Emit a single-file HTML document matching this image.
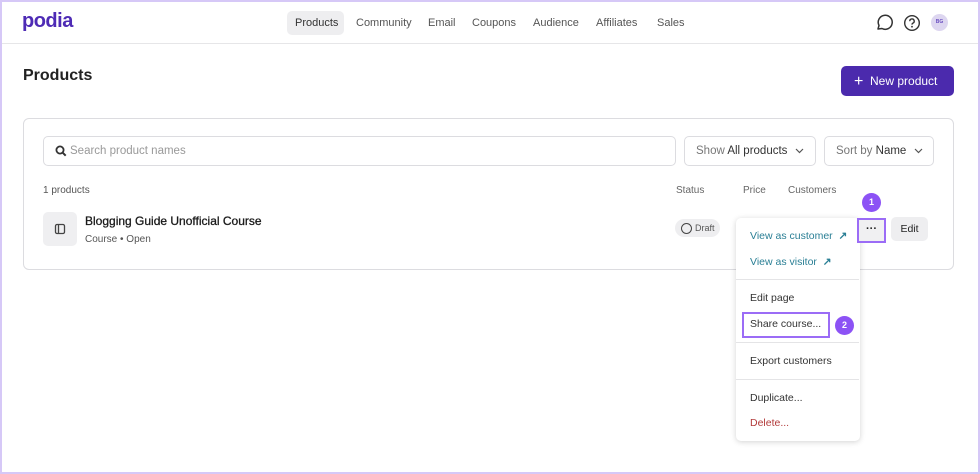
<!DOCTYPE html>
<html><head><style>
*{box-sizing:border-box;margin:0;padding:0}
body{width:980px;height:474px;overflow:hidden;font-family:"Liberation Sans",sans-serif;background:#fff;position:relative;color:#222}
.frame{position:absolute;inset:0;border:2px solid #d6c8f7;pointer-events:none;z-index:10}
.a{position:absolute;white-space:nowrap}
.hdr{position:absolute;left:0;top:0;width:980px;height:44px;border-bottom:1.5px solid #e6e6e8}
.nav{font-size:11px;color:#555;top:17px}
.btn{position:absolute;border:1px solid #dcdce0;border-radius:5px;background:#fff}
.badge{position:absolute;width:19px;height:19px;border-radius:50%;background:#8c52f5;color:#fff;font-size:9px;font-weight:bold;text-align:center;line-height:19px;z-index:5}
.mi{position:absolute;left:750px;font-size:10.5px;color:#333}
.sep{position:absolute;left:736px;width:123px;height:1px;background:#e4e4e6}
</style></head><body>
<div class="frame"></div>
<div class="hdr"></div>
<div class="a" style="left:22px;top:10px;font-size:20px;font-weight:bold;color:#4e2bb5;letter-spacing:-0.5px">podia</div>
<div class="a" style="left:287px;top:11px;width:57px;height:24px;background:#eeeef0;border-radius:5px"></div>
<div class="a nav" style="left:295px;color:#333">Products</div>
<div class="a nav" style="left:356px">Community</div>
<div class="a nav" style="left:428px">Email</div>
<div class="a nav" style="left:472px">Coupons</div>
<div class="a nav" style="left:533px">Audience</div>
<div class="a nav" style="left:596px">Affiliates</div>
<div class="a nav" style="left:657px">Sales</div>
<svg class="a" style="left:875px;top:14px" width="18" height="18" viewBox="0 0 18 18"><path d="M3 15 L4 11.5 A7 7 0 1 1 7 14.5 Z" fill="none" stroke="#333" stroke-width="1.5" stroke-linejoin="round"/></svg>
<svg class="a" style="left:903px;top:14px" width="18" height="18" viewBox="0 0 18 18"><circle cx="9" cy="9" r="7.3" fill="none" stroke="#333" stroke-width="1.4"/><path d="M6.8 7.2a2.2 2.2 0 1 1 3 2c-.6.3-.8.7-.8 1.4" fill="none" stroke="#333" stroke-width="1.4"/><circle cx="9" cy="12.7" r=".9" fill="#333"/></svg>
<div class="a" style="left:931px;top:14px;width:17px;height:17px;border-radius:50%;background:#ddd6f0;font-size:5px;color:#6b4fc0;text-align:center;line-height:17px;font-weight:bold">BG</div>

<div class="a" style="left:23px;top:67px;font-size:16px;font-weight:bold;color:#222">Products</div>
<div class="a" style="left:841px;top:66px;width:113px;height:30px;background:#4b2aad;border-radius:5px;color:#fff;font-size:12px;line-height:30px;padding-left:13px"><span style="font-size:16px;vertical-align:-1px">+</span>&nbsp; New product</div>

<div class="a" style="left:23px;top:118px;width:931px;height:152px;border:1px solid #dcdce0;border-radius:6px"></div>
<div class="btn" style="left:43px;top:136px;width:633px;height:30px"></div>
<svg class="a" style="left:55px;top:145px" width="12" height="12" viewBox="0 0 12 12"><circle cx="5" cy="5" r="3.6" fill="none" stroke="#333" stroke-width="1.8"/><path d="M7.7 7.7l3 3" stroke="#333" stroke-width="2"/></svg>
<div class="a" style="left:70px;top:145px;font-size:11.5px;color:#999">Search product names</div>
<div class="btn" style="left:684px;top:136px;width:132px;height:30px"></div>
<div class="a" style="left:696px;top:145px;font-size:11.5px;color:#777">Show <span style="color:#333">All products</span></div>
<svg class="a" style="left:795px;top:148px" width="9" height="6" viewBox="0 0 9 6"><path d="M1 1l3.5 3.5L8 1" fill="none" stroke="#555" stroke-width="1.2"/></svg>
<div class="btn" style="left:824px;top:136px;width:110px;height:30px"></div>
<div class="a" style="left:836px;top:145px;font-size:11.5px;color:#777">Sort by <span style="color:#333">Name</span></div>
<svg class="a" style="left:914px;top:148px" width="9" height="6" viewBox="0 0 9 6"><path d="M1 1l3.5 3.5L8 1" fill="none" stroke="#555" stroke-width="1.2"/></svg>

<div class="a" style="left:43px;top:185px;font-size:10px;color:#555">1 products</div>
<div class="a" style="left:676px;top:185px;font-size:10px;color:#666">Status</div>
<div class="a" style="left:743px;top:185px;font-size:10px;color:#666">Price</div>
<div class="a" style="left:788px;top:185px;font-size:10px;color:#666">Customers</div>

<div class="a" style="left:43px;top:212px;width:34px;height:34px;background:#efeff1;border-radius:5px"></div>
<svg class="a" style="left:54px;top:223px" width="12" height="12" viewBox="0 0 12 12"><rect x="1.5" y="1.5" width="9" height="9" rx="1.5" fill="none" stroke="#444" stroke-width="1.3"/><path d="M4.5 1.5v9" stroke="#444" stroke-width="1.3"/></svg>
<div class="a" style="left:85px;top:214px;font-size:12px;color:#1a1a1a;-webkit-text-stroke:0.3px #1a1a1a">Blogging Guide Unofficial Course</div>
<div class="a" style="left:85px;top:234px;font-size:10px;color:#555">Course • Open</div>

<div class="a" style="left:675px;top:219px;width:45px;height:18px;background:#eeeef0;border-radius:9px"></div>
<div class="a" style="left:681px;top:223px;width:11px;height:11px;border:1.3px solid #444;border-radius:50%"></div>
<div class="a" style="left:695px;top:223px;font-size:9px;color:#555">Draft</div>

<div class="a" style="left:736px;top:218px;width:124px;height:223px;background:#fff;border-radius:5px;box-shadow:0 1px 6px rgba(0,0,0,.18)"></div>
<div class="a" style="left:857px;top:218px;width:29px;height:25px;background:#f0f0f2;border:2px solid #9b6cf6;text-align:center;font-size:11px;font-weight:bold;line-height:18px;z-index:4">···</div>
<div class="a" style="left:891px;top:217px;width:37px;height:24px;background:#eeeef0;border-radius:5px;font-size:10.5px;text-align:center;line-height:24px">Edit</div>
<div class="badge" style="left:862px;top:193px">1</div>

<div class="mi" style="top:230px;color:#2a7f95">View as customer &nbsp;<b>&#8599;</b></div>
<div class="mi" style="top:256px;color:#2a7f95">View as visitor &nbsp;<b>&#8599;</b></div>
<div class="sep" style="top:279px"></div>
<div class="mi" style="top:292px">Edit page</div>
<div class="a" style="left:742px;top:312px;width:88px;height:26px;border:2px solid #9b6cf6"></div>
<div class="mi" style="top:318px">Share course...</div>
<div class="badge" style="left:835px;top:316px">2</div>
<div class="sep" style="top:342px"></div>
<div class="mi" style="top:355px">Export customers</div>
<div class="sep" style="top:379px"></div>
<div class="mi" style="top:392px">Duplicate...</div>
<div class="mi" style="top:417px;color:#b23a3a">Delete...</div>
</body></html>
